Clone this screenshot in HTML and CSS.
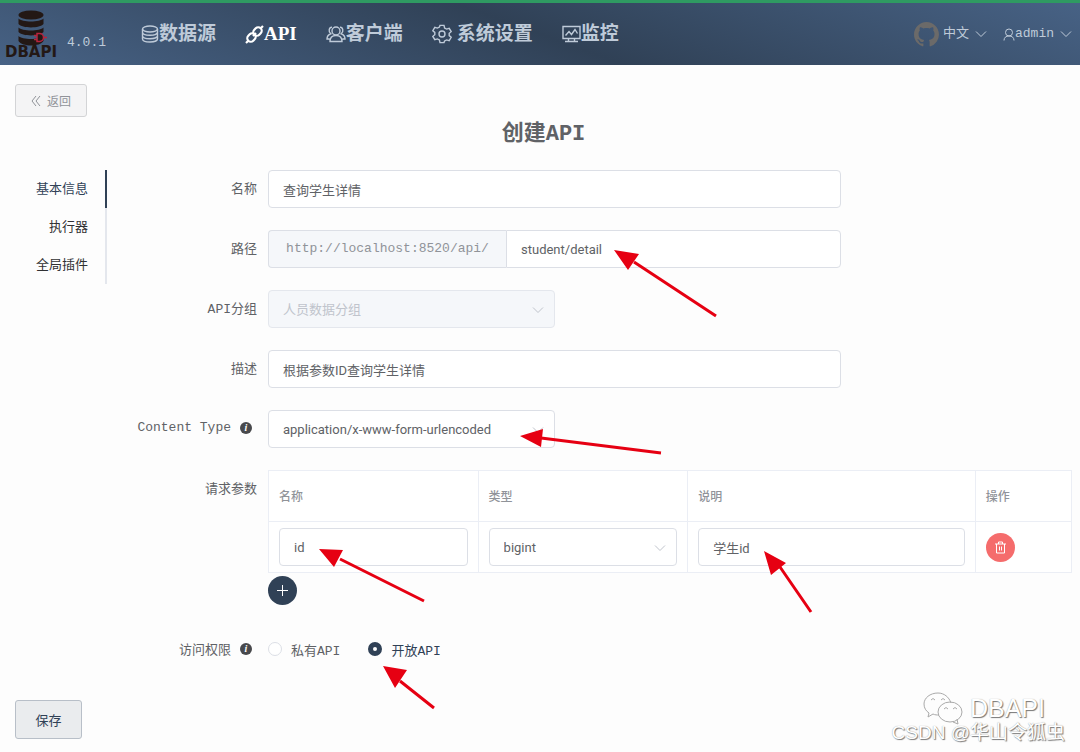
FILE: index.html
```html
<!DOCTYPE html>
<html lang="zh-CN">
<head>
  <meta charset="UTF-8" />
  <meta name="viewport" content="width=device-width, initial-scale=1" />
  <title>创建API</title>
  <link rel="stylesheet" href="styles.css">
</head>
<body>

  <header class="header">
    <a class="logo" href="#">
      <svg class="logo-icon" viewBox="0 0 26 36" width="26" height="36">
        <g fill="#231815">
          <ellipse cx="13" cy="5" rx="12.5" ry="4.5"/>
          <path d="M.5 8.500C4 12.500 22 12.500 25.500 8.500V14C22 18.500 4 18.500 .5 14z"/>
          <path d="M.5 17.500C4 21.500 22 21.500 25.500 17.500V22C22 26.500 4 26.500 .5 22z"/>
          <path d="M.5 26C4 30 22 30 25.500 26V31C22 37 4 37 .5 31z"/>
        </g>
        <path class="plug" d="M19 23.500h2.500a4 4 0 0 1 0 8H19zM16 25.500h3M16 29.500h3M25.500 27.500H29"/>
      </svg>
      <span class="logo-name">DBAPI</span>
    </a>
    <span class="version">4.0.1</span>

    <nav class="nav">
      <a href="#">
        <svg viewBox="0 0 18 18" width="18" height="18">
          <ellipse cx="9" cy="4" rx="7.500" ry="3"/>
          <path d="M1.500 4v10c0 4 15 4 15 0V4M1.500 7.300c0 4 15 4 15 0M1.500 10.700c0 4 15 4 15 0"/>
        </svg>数据源</a>
      <a class="active" href="#">
        <svg class="link-icon" viewBox="0 0 19 19" width="19" height="19">
          <rect x="8" y="3" width="9" height="7" rx="3.500" transform="rotate(-45 12.500 6.500)"/>
          <rect x="2" y="9" width="9" height="7" rx="3.500" transform="rotate(-45 6.500 12.500)"/>
          <path d="M15.500 3.500l2.500-2.500M1 18l2.500-2.500M8 11l3-3"/>
        </svg>API</a>
      <a href="#">
        <svg viewBox="0 0 20 18" width="20" height="18">
          <circle cx="10" cy="6" r="4"/>
          <path d="M4 16.500c0-3.500 2-6 6-6s6 2.500 6 6zM6 2.200C3 2 2 6.500 4.800 8.800 2.500 9.500 1 11.500 1 14h2.500M14 2.200c3-.2 4 4.300 1.200 6.600 2.300.7 3.800 2.700 3.800 5.200h-2.500"/>
        </svg>客户端</a>
      <a href="#">
        <svg class="gear-icon" viewBox="0 0 20 20" width="20" height="20">
          <path d="M8 1h4l.6 2.700 2 1.100 2.600-.8 2 3.500-2 1.800v2.400l2 1.800-2 3.500-2.600-.8-2 1.100L12 19H8l-.6-2.700-2-1.100-2.600.8-2-3.500 2-1.800V8.300l-2-1.800 2-3.500 2.600.8 2-1.100z" transform="translate(0 .5) scale(1 .95)"/>
          <circle cx="10" cy="10" r="3"/>
        </svg>系统设置</a>
      <a href="#">
        <svg viewBox="0 0 19 18" width="19" height="18">
          <path d="M1 1.500h17v12H1zM6.500 13.500v3M12.500 13.500v3M3 16.500h13M3.500 10.500L7 6.500l2.500 3 3.500-5 2.500 4"/>
        </svg>监控</a>
    </nav>

    <div class="tools">
      <a class="github" href="#" aria-label="GitHub">
        <svg viewBox="0 0 16 16" width="25" height="25">
          <path fill="#6b6a69" d="M8 0C3.580 0 0 3.580 0 8c0 3.540 2.290 6.530 5.470 7.590.4.070.55-.17.55-.38 0-.19-.01-.82-.01-1.490-2.010.37-2.530-.49-2.690-.94-.09-.23-.48-.94-.82-1.130-.28-.15-.68-.52-.01-.53.63-.01 1.080.58 1.230.82.72 1.210 1.870.87 2.330.66.07-.52.28-.87.51-1.070-1.780-.2-3.640-.89-3.640-3.950 0-.87.31-1.590.82-2.150-.08-.2-.36-1.020.08-2.120 0 0 .67-.21 2.200.82.64-.18 1.320-.27 2-.27s1.360.09 2 .27c1.530-1.040 2.200-.82 2.200-.82.44 1.100.16 1.920.08 2.120.51.56.82 1.270.82 2.150 0 3.070-1.870 3.750-3.650 3.950.29.25.54.73.54 1.480 0 1.070-.01 1.930-.01 2.200 0 .21.15.46.55.38A8.010 8.010 0 0 0 16 8c0-4.420-3.580-8-8-8z"/>
        </svg>
      </a>
      <button class="drop" type="button">中文
        <svg class="chevron" viewBox="0 0 12 8" width="12" height="8"><path d="M1 1.500l5 5 5-5"/></svg>
      </button>
      <button class="drop user" type="button">
        <svg viewBox="0 0 12 13" width="12" height="13"><circle cx="6" cy="4.500" r="3.500"/><path d="M1 12.500c0-3 2-4.500 5-4.500s5 1.500 5 4.500"/></svg>admin
        <svg class="chevron" viewBox="0 0 12 8" width="12" height="8"><path d="M1 1.500l5 5 5-5"/></svg>
      </button>
    </div>
  </header>

  <main class="main">
    <button class="btn-back" type="button">
      <svg viewBox="0 0 10 12" width="10" height="12"><path d="M5 1L1 6l4 5M9 1L5 6l4 5"/></svg>返回
    </button>
    <h1>创建API</h1>

    <div class="content">
      <nav class="tabs">
        <a class="active" href="#">基本信息</a>
        <a href="#">执行器</a>
        <a href="#">全局插件</a>
      </nav>

      <form class="form">
        <label class="label" for="name">名称</label>
        <input class="input wide" id="name" type="text" value="查询学生详情">

        <label class="label" for="path">路径</label>
        <div class="input-group wide">
          <span class="prepend">http://localhost:8520/api/</span>
          <input class="input" id="path" type="text" value="student/detail">
        </div>

        <label class="label" for="group">API分组</label>
        <div class="select half">
          <select class="input" id="group" disabled><option>人员数据分组</option></select>
          <svg class="chevron" viewBox="0 0 12 8" width="12" height="8"><path d="M1 1.500l5 5 5-5"/></svg>
        </div>

        <label class="label" for="desc">描述</label>
        <input class="input wide" id="desc" type="text" value="根据参数ID查询学生详情">

        <label class="label" for="ctype">Content Type <span class="info">i</span></label>
        <div class="select half">
          <select class="input" id="ctype"><option>application/x-www-form-urlencoded</option></select>
          <svg class="chevron" viewBox="0 0 12 8" width="12" height="8"><path d="M1 1.500l5 5 5-5"/></svg>
        </div>

        <span class="label">请求参数</span>
        <div class="params">
          <table>
            <thead>
              <tr><th class="col-name">名称</th><th class="col-type">类型</th><th>说明</th><th class="col-op">操作</th></tr>
            </thead>
            <tbody>
              <tr>
                <td><input class="input" type="text" value="id" aria-label="名称"></td>
                <td>
                  <div class="select">
                    <select class="input" aria-label="类型"><option>bigint</option></select>
                    <svg class="chevron" viewBox="0 0 12 8" width="12" height="8"><path d="M1 1.500l5 5 5-5"/></svg>
                  </div>
                </td>
                <td><input class="input" type="text" value="学生id" aria-label="说明"></td>
                <td>
                  <button class="round danger" type="button" aria-label="删除">
                    <svg viewBox="0 0 13 13" width="13" height="13"><path d="M1 3h11M4.500 3V1h4v2M2.500 3v9h8V3M5.500 5.500v4M7.500 5.500v4"/></svg>
                  </button>
                </td>
              </tr>
            </tbody>
          </table>
          <button class="round add" type="button" aria-label="添加">
            <svg viewBox="0 0 13 13" width="13" height="13"><path d="M6.500 1v11M1 6.500h11"/></svg>
          </button>
        </div>

        <span class="label">访问权限 <span class="info">i</span></span>
        <div class="radios">
          <label><input type="radio" name="access">私有API</label>
          <label class="checked"><input type="radio" name="access" checked>开放API</label>
        </div>
      </form>
    </div>

    <button class="btn-save" type="button">保存</button>
  </main>

  <!-- red pointers drawn over the form -->
  <svg class="arrows" viewBox="0 0 1080 752" width="1080" height="752">
    <g stroke="#e60012" stroke-width="3">
      <path d="M634 262L716 316M541 438L661 453M340 559L424 601M780 567L811 612M400 681L434 708"/>
    </g>
    <g fill="#e60012">
      <path d="M614 250L639 254 628 270zM520 436L543 429 541 447zM319 549L343 550 334 567zM764 551L786 563 771 575zM383 666L407 670 395 688z"/>
    </g>
  </svg>

  <div class="watermark">
    <div class="brand">
      <svg viewBox="0 0 40 34" width="40" height="34">
        <path d="M15 2C7 2 1 7 1 13c0 4 2 7 5 9l-1 4 5-3c2 1 4 1 6 1M28 12C26 6 21 2 15 2"/>
        <ellipse cx="27" cy="21" rx="12" ry="10"/>
        <path d="M30 31l5 2-1-5M8 9q2-3 4 0M18 9q2-3 4 0M21 18q2-3 4 0M30 18q2-3 4 0"/>
      </svg>DBAPI
    </div>
    <div>CSDN @华山令狐虫</div>
  </div>
</body>
</html>
```
FILE: styles.css
```css
* { box-sizing: border-box; margin: 0; padding: 0; }

body {
  font-family: "Liberation Mono", "Noto Sans CJK SC", monospace;
  font-size: 13px;
  color: #606266;
  background: #fdfdfd;
}

a { text-decoration: none; color: inherit; }
button, input, select { font: inherit; color: inherit; }
button { cursor: pointer; }
svg { fill: none; stroke: currentColor; flex: none; }

/* header */
.header {
  display: flex;
  align-items: center;
  height: 65px;
  padding: 0 8px 0 5px;
  border-top: 3px solid #2f9a62;
  background: linear-gradient(20deg, #476285, #304156, #476285);
  color: #bfcbd9;
}
.logo {
  width: 52px;
  display: flex;
  flex-direction: column;
  align-items: center;
  color: #231815;
}
.logo svg { stroke: none; overflow: visible; }
.logo .plug { fill: #231815; stroke: #b8243f; stroke-width: 1.5; }
.logo-name {
  font: bold 15px/13px "DejaVu Sans", sans-serif;
}
.version {
  margin: 16px 0 0 10px;
  width: 74px;
}
.nav {
  display: flex;
  gap: 29px;
  font: bold 19px/28px "Liberation Serif", "Noto Sans CJK SC", serif;
}
.nav a { display: flex; align-items: center; white-space: nowrap; }
.nav svg { stroke-width: 1.4; }
.nav .active { color: #fff; }
.nav .link-icon { stroke-width: 2.2; }
.nav .gear-icon { margin-right: 5px; }

.tools {
  display: flex;
  align-items: center;
  margin-left: auto;
}
.github { display: flex; margin-right: 4px; }
.github svg { stroke: none; }
.drop {
  display: flex;
  align-items: center;
  gap: 6px;
  border: none;
  background: none;
  line-height: 16px;
  white-space: nowrap;
}
.user { margin-left: 16px; gap: 0; }
.user .chevron { margin-left: 6px; }

/* page */
.main {
  padding: 19px 8px 13px 15px;
}
.btn-back {
  display: flex;
  align-items: center;
  justify-content: center;
  gap: 6px;
  width: 72px;
  height: 33px;
  border: 1px solid #d3d4d6;
  border-radius: 3px;
  background: #f4f4f5;
  color: #909399;
  font-size: 12px;
}
h1 {
  padding-top: 2px;
  font-size: 22px;
  line-height: 32px;
  text-align: center;
}
.content {
  display: flex;
  margin-top: 19px;
}
.tabs {
  flex: none;
  width: 92px;
  align-self: flex-start;
  border-right: 2px solid #e4e7ed;
  color: #303133;
  line-height: 40px;
  text-align: right;
}
.tabs a {
  display: block;
  height: 38px;
  margin-right: -2px;
  padding-right: 17px;
  border-right: 2px solid transparent;
}
.tabs .active { color: #304156; border-color: #304156; }

.form {
  flex: 1;
  display: grid;
  grid-template-columns: 150px minmax(0, 1fr);
  gap: 22px 11px;
}
.label {
  display: flex;
  align-items: center;
  justify-content: flex-end;
  gap: 9px;
  height: 35px;
  white-space: nowrap;
}
.info {
  width: 12px;
  height: 12px;
  margin-right: 5px;
  border-radius: 50%;
  background: #48494c;
  color: #fff;
  font: italic bold 10px/12px "Liberation Serif", serif;
  text-align: center;
}
.wide { max-width: 573px; }
.half { max-width: 287px; }

.input {
  display: block;
  width: 100%;
  height: 38px;
  padding: 0 14px;
  border: 1px solid #dcdfe6;
  border-radius: 4px;
  background: #fff;
  color: #606266;
  font: 13px Roboto, "Noto Sans CJK SC", sans-serif;
}
.input-group { display: flex; }
.input-group .input { flex: 1; min-width: 0; border-radius: 0 4px 4px 0; }
.prepend {
  flex: none;
  width: 238px;
  border: 1px solid #dcdfe6;
  border-right: none;
  border-radius: 4px 0 0 4px;
  background: #f5f7fa;
  color: #909399;
  line-height: 36px;
  text-align: center;
}
.select { position: relative; }
.select select { appearance: none; }
.select select:disabled {
  background: #f5f7fa;
  border-color: #e4e7ed;
  color: #c0c4cc;
  opacity: 1;
}
.select .chevron {
  position: absolute;
  right: 11px;
  top: 16px;
  color: #c0c4cc;
  pointer-events: none;
}

/* request params */
table {
  width: 100%;
  table-layout: fixed;
  border-collapse: collapse;
  background: #fff;
}
th, td {
  height: 51px;
  padding: 0 10px;
  border: 1px solid #ebeef5;
  text-align: left;
}
th { color: #909399; font-size: 12px; font-weight: 500; }
.col-name, .col-type { width: 26.1%; }
.col-op { width: 12%; }
.round {
  display: flex;
  align-items: center;
  justify-content: center;
  width: 29px;
  height: 29px;
  border: none;
  border-radius: 50%;
  color: #fff;
}
.danger { background: #f56c6c; }
.add { margin: 3px 0 4px; background: #304156; }

.radios {
  display: flex;
  align-items: center;
  gap: 28px;
  height: 36px;
}
.radios label { display: flex; align-items: center; gap: 9px; }
.radios .checked { color: #304156; }
.radios input {
  appearance: none;
  width: 14px;
  height: 14px;
  border: 1px solid #dcdfe6;
  border-radius: 50%;
  background: #fff;
}
.radios input:checked { border: 5px solid #304156; }

.btn-save {
  display: block;
  width: 67px;
  height: 39px;
  margin-top: 33px;
  border: 1px solid #b8bfc8;
  border-radius: 3px;
  background: #eaecee;
  color: #304156;
}

.arrows {
  position: absolute;
  top: 0;
  left: 0;
  stroke: none;
  pointer-events: none;
}

.watermark {
  position: absolute;
  right: 15px;
  bottom: 8px;
  color: #fff;
  font: 19px/22px "Liberation Sans", "Noto Sans CJK SC", sans-serif;
  text-shadow: 1px 1px 1px #777, 0 0 1px #999;
  text-align: right;
  pointer-events: none;
}
.brand {
  display: flex;
  align-items: center;
  justify-content: flex-end;
  gap: 7px;
  height: 28px;
  padding-right: 20px;
  font-size: 25px;
}
.brand svg { stroke: #aaa; }
```
